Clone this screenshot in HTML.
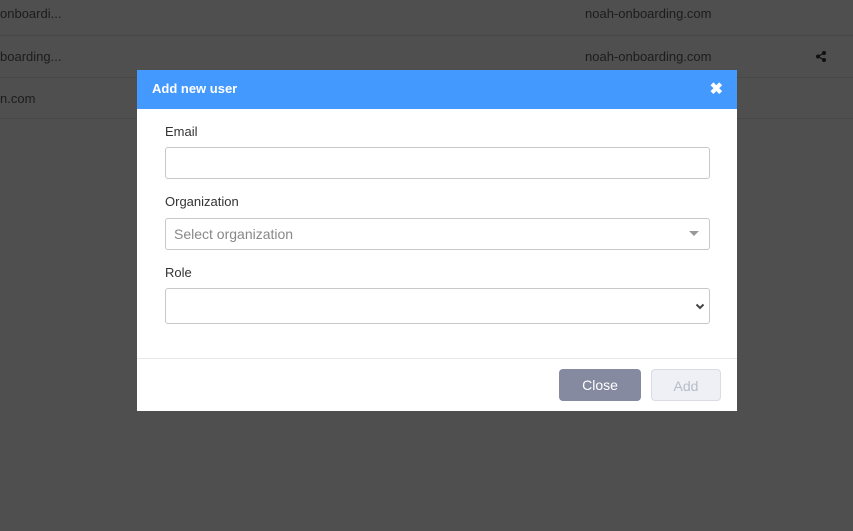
<!DOCTYPE html>
<html><head><style>
*{box-sizing:border-box;margin:0;padding:0}
body{width:853px;height:531px;background:#4f4f4f;font-family:"Liberation Sans",sans-serif;position:relative;overflow:hidden;color:#222}
.row{position:absolute;left:0;width:853px;border-bottom:1px solid #474747;font-size:13px;color:#1c1c1c}
.t{position:absolute;top:0}
.modal{position:absolute;left:137px;top:70px;width:600px;height:341px;background:#fff}
.hd{height:39px;background:#4399fd;color:#fff;font-weight:bold;font-size:13px;padding:11px 15px;position:relative}
.x{position:absolute;right:14px;top:9px;font-size:16px}
label{position:absolute;left:28px;font-size:13px;color:#333}
.in{position:absolute;left:28px;width:545px;border:1px solid #c8c8c8;border-radius:3px}
.ft{position:absolute;left:0;top:288px;width:600px;border-top:1px solid #e8e8e8}
.btn{position:absolute;top:299px;height:32px;border-radius:4px;font-size:14px;text-align:center;line-height:32px}
</style></head><body>
<div class="row" style="top:0;height:36px"><span class="t" style="left:0;top:6px">onboardi...</span><span class="t" style="left:585px;top:6px">noah-onboarding.com</span></div>
<div class="row" style="top:36px;height:42px"><span class="t" style="left:0;top:13px">boarding...</span><span class="t" style="left:585px;top:13px">noah-onboarding.com</span>
<svg style="position:absolute;left:816px;top:15px" width="10" height="11" viewBox="0 0 10 11"><circle cx="8" cy="2" r="2" fill="#111"/><circle cx="2" cy="5.5" r="2" fill="#111"/><circle cx="8" cy="9" r="2" fill="#111"/><path d="M8 2L2 5.5L8 9" stroke="#111" stroke-width="1.2" fill="none"/></svg></div>
<div class="row" style="top:78px;height:41px"><span class="t" style="left:0;top:13px">n.com</span></div>
<div class="modal">
<div class="hd">Add new user<span class="x">✖</span></div>
<label style="top:54px">Email</label>
<div class="in" style="top:77px;height:32px"></div>
<label style="top:124px">Organization</label>
<div class="in" style="top:148px;height:32px;color:#888;font-size:14px;padding:7px 8px">Select organization<span style="position:absolute;right:10px;top:12px;border:5px solid transparent;border-top:5px solid #999"></span></div>
<label style="top:195px">Role</label>
<div class="in" style="top:218px;height:36px"><svg style="position:absolute;right:4px;top:14px" width="10" height="7" viewBox="0 0 10 7"><path d="M1.5 1.5L5 5L8.5 1.5" stroke="#444" stroke-width="2" fill="none"/></svg></div>
<div class="ft"></div>
<div class="btn" style="left:422px;width:82px;background:#868aa0;color:#fff">Close</div>
<div class="btn" style="left:514px;width:70px;background:#eef0f5;border:1px solid #d9dce5;color:#b8bcc8">Add</div>
</div>
</body></html>
